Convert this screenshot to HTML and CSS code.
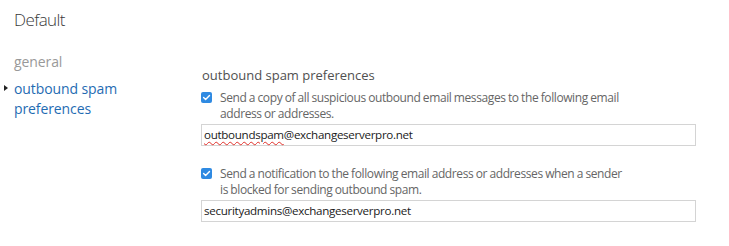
FILE: index.html
```html
<!DOCTYPE html>
<html lang="en">
<head>
<meta charset="utf-8">
<title>Default</title>
<link rel="stylesheet" href="styles.css">
</head>
<body>
<div class="page">
  <h1 class="title">Default</h1>
  <div class="body">
    <nav class="sidebar">
      <div class="nav-item">general</div>
      <div class="nav-item selected">
        <span class="marker"></span>
        <span class="nav-text">outbound spam preferences</span>
      </div>
    </nav>
    <main class="main">
      <h2 class="section-title">outbound spam preferences</h2>
      <div class="option">
        <span class="check"><svg viewBox="0 0 11 11" width="11" height="11"><rect x="0" y="0" width="11" height="11" rx="2" fill="#2f8ae2"/><path d="M2.6 5.6 L4.6 7.6 L8.5 3.4" fill="none" stroke="#fff" stroke-width="1.4" stroke-linecap="round" stroke-linejoin="round"/></svg></span>
        <span class="option-text">Send a copy of all suspicious outbound email messages to the following email address or addresses.</span>
      </div>
      <div class="field"><span class="misspelled">outboundspam</span>@exchangeserverpro.net</div>
      <div class="option second">
        <span class="check"><svg viewBox="0 0 11 11" width="11" height="11"><rect x="0" y="0" width="11" height="11" rx="2" fill="#2f8ae2"/><path d="M2.6 5.6 L4.6 7.6 L8.5 3.4" fill="none" stroke="#fff" stroke-width="1.4" stroke-linecap="round" stroke-linejoin="round"/></svg></span>
        <span class="option-text">Send a notification to the following email address or addresses when a sender<br>is blocked for sending outbound spam.</span>
      </div>
      <div class="field">securityadmins@exchangeserverpro.net</div>
    </main>
  </div>
</div>
</body>
</html>
```
FILE: styles.css
```css
html, body {
  margin: 0;
  padding: 0;
  background: #ffffff;
}
body {
  font-family: "Open Sans", "Noto Sans", sans-serif;
  width: 729px;
  height: 246px;
  overflow: hidden;
}
.page {
  display: flex;
  flex-direction: column;
}
.title {
  margin: 0;
  padding: 8px 0 0 14px;
  font-size: 17px;
  line-height: 23px;
  font-weight: 300;
  letter-spacing: -0.6px;
  color: #3a3a3a;
}
.body {
  display: flex;
}
.sidebar {
  width: 187px;
  padding: 21px 0 0 14px;
  display: flex;
  flex-direction: column;
  gap: 7px;
}
.nav-item {
  font-size: 14px;
  line-height: 20px;
  color: #999999;
  letter-spacing: -0.1px;
}
.nav-item.selected {
  display: flex;
  align-items: flex-start;
  margin-left: -10px;
  gap: 6px;
  color: #1f6cb3;
}
.nav-text {
  width: 130px;
}
.marker {
  width: 0;
  height: 0;
  margin-top: 6px;
  border-left: 4px solid #222;
  border-top: 3px solid transparent;
  border-bottom: 3px solid transparent;
}
.main {
  padding-top: 35px;
  display: flex;
  flex-direction: column;
  width: 495px;
}
.section-title {
  margin: 0 0 6px 1px;
  font-size: 13px;
  line-height: 18px;
  font-weight: 400;
  color: #505050;
  letter-spacing: 0;
}
.option {
  display: flex;
  align-items: flex-start;
  gap: 8px;
}
.option.second {
  margin-top: 20px;
}
.check {
  display: flex;
  margin-top: 2px;
  width: 11px;
  height: 11px;
  flex: none;
}
.option-text {
  width: 414px;
  font-size: 12px;
  line-height: 16px;
  letter-spacing: -0.4px;
  word-spacing: -0.3px;
  color: #666666;
}
.field {
  margin-top: 2px;
  box-sizing: border-box;
  height: 22px;
  border: 1px solid #d4d4d4;
  padding: 0 2px;
  font-size: 11.6px;
  line-height: 20px;
  letter-spacing: -0.3px;
  color: #1a1a1a;
}
.misspelled {
  text-decoration: underline wavy #e0302a;
  text-decoration-thickness: 1px;
  text-underline-offset: 2px;
}
```
